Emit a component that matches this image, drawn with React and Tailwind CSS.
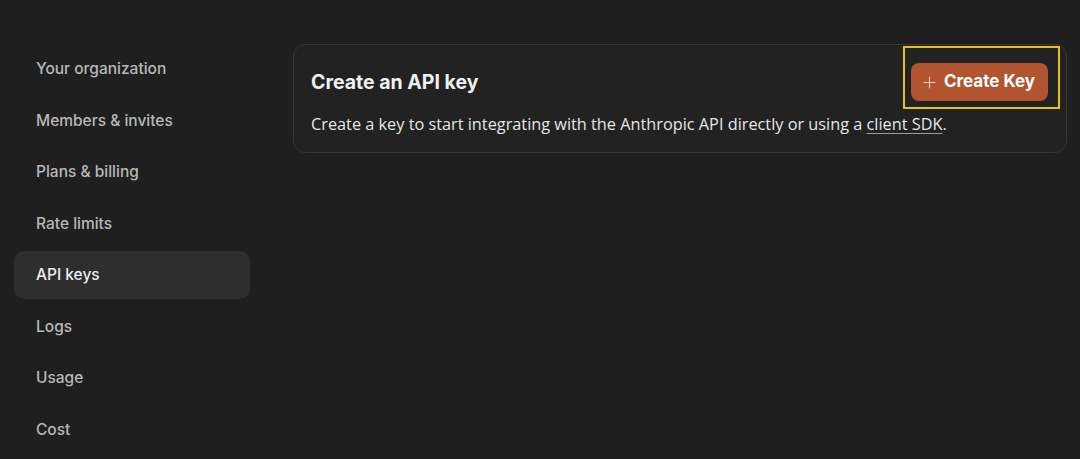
import React from "react";
import { Plus } from "lucide-react";

const navItems = [
  "Your organization",
  "Members & invites",
  "Plans & billing",
  "Rate limits",
  "API keys",
  "Logs",
  "Usage",
  "Cost",
];

const App = () => {
  return (
    <div className="flex h-[459px] w-[1080px] overflow-hidden bg-[#1f1f1f] font-['Inter',sans-serif]">
      <nav className="flex w-[264px] shrink-0 flex-col gap-[4px] pl-[14px] pr-[14px] pt-[45px]">
        {navItems.map((item) => (
          <div
            key={item}
            className={
              item === "API keys"
                ? "flex h-[47.5px] items-center rounded-[10px] bg-[#2e2e2e] px-[22px] text-[15.5px] font-medium text-[#ececec]"
                : "flex h-[47.5px] items-center rounded-[10px] px-[22px] text-[15.5px] font-medium text-[#b8b8b8]"
            }
          >
            {item}
          </div>
        ))}
      </nav>
      <main className="flex-1 pt-[44px] pr-[13px] pl-[29px]">
        <div className="rounded-[12px] border border-[#363636] bg-[#222222] pl-[17px] pr-[18px] pt-[18px] pb-[16px]">
          <div className="flex items-center justify-between">
            <h2 className="mt-[2px] text-[19.5px] font-bold text-[#f0f0f0]">Create an API key</h2>
            <div className="relative">
              <div className="pointer-events-none absolute -top-[17px] -bottom-[8px] -left-[8px] -right-[12px] border-2 border-[#e8c018]" />
              <button className="flex h-[38px] items-center gap-[5px] rounded-[8px] bg-[#b1542f] pl-[9px] pr-[13px] text-[17px] font-bold text-white">
                <Plus className="h-[19px] w-[19px] text-[#f1d4c6]" strokeWidth={1.3} />
                Create Key
              </button>
            </div>
          </div>
          <p className="mt-[11px] font-['Open_Sans',sans-serif] text-[16.3px] leading-[24px] text-[#e6e6e6]">
            Create a key to start integrating with the Anthropic API directly or using a{" "}
            <span className="underline underline-offset-[3px] decoration-[#9a9a9a]">client SDK</span>.
          </p>
        </div>
      </main>
    </div>
  );
};

export default App;
